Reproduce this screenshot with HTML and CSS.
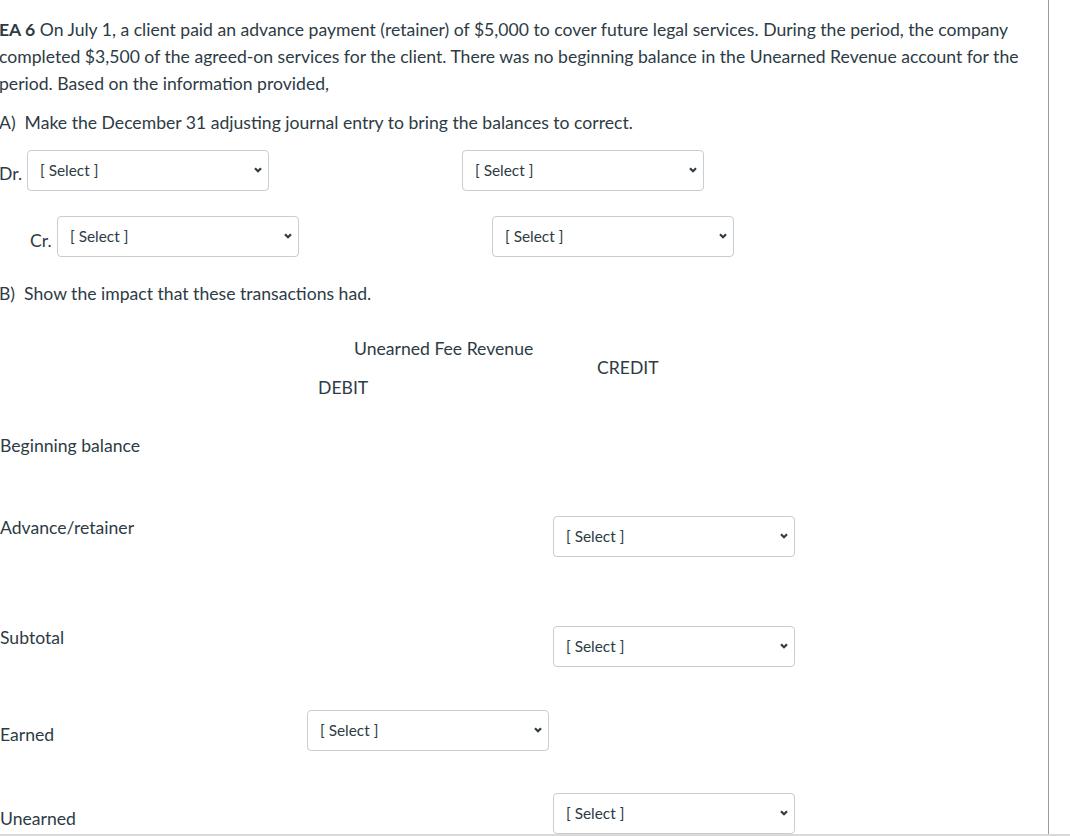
FILE: index.html
```html
<!DOCTYPE html>
<html lang="en">
<head>
<meta charset="utf-8">
<title>EA 6</title>
<link rel="stylesheet" href="styles.css">
</head>
<body>
<div class="frame">
  <div class="content">
    <p class="question"><strong>EA 6</strong> On July 1, a client paid an advance payment (retainer) of $5,000 to cover future legal services. During the period, the company completed $3,500 of the agreed-on services for the client. There was no beginning balance in the Unearned Revenue account for the period. Based on the information provided,</p>
    <p class="part part-a">A)&nbsp; Make the December 31 adjusting journal entry to bring the balances to correct.</p>

    <div class="entry">
      <span class="entry-label">Dr.</span>
      <span class="sel"><select><option>[ Select ]</option></select><svg class="chev" viewBox="0 0 8 6" width="8" height="6"><path d="M1 1.2 L4 4.2 L7 1.2" fill="none" stroke="#2d3b45" stroke-width="2.2"/></svg></span>
      <span class="sel sel-amount"><select><option>[ Select ]</option></select><svg class="chev" viewBox="0 0 8 6" width="8" height="6"><path d="M1 1.2 L4 4.2 L7 1.2" fill="none" stroke="#2d3b45" stroke-width="2.2"/></svg></span>
    </div>

    <div class="entry entry-cr">
      <span class="entry-label">Cr.</span>
      <span class="sel"><select><option>[ Select ]</option></select><svg class="chev" viewBox="0 0 8 6" width="8" height="6"><path d="M1 1.2 L4 4.2 L7 1.2" fill="none" stroke="#2d3b45" stroke-width="2.2"/></svg></span>
      <span class="sel sel-amount"><select><option>[ Select ]</option></select><svg class="chev" viewBox="0 0 8 6" width="8" height="6"><path d="M1 1.2 L4 4.2 L7 1.2" fill="none" stroke="#2d3b45" stroke-width="2.2"/></svg></span>
    </div>

    <p class="part part-b">B)&nbsp; Show the impact that these transactions had.</p>

    <div class="taccount">
      <div class="trow thead">
        <div></div>
        <div class="debit-head">
          <div class="acct-title">Unearned Fee Revenue</div>
          <div class="debit-label">DEBIT</div>
        </div>
        <div class="credit-label">CREDIT</div>
      </div>

      <div class="trow row-begin">
        <div class="tlabel">Beginning balance</div>
      </div>

      <div class="trow row-advance">
        <div class="tlabel">Advance/retainer</div>
        <div></div>
        <span class="sel sel-cell"><select><option>[ Select ]</option></select><svg class="chev" viewBox="0 0 8 6" width="8" height="6"><path d="M1 1.2 L4 4.2 L7 1.2" fill="none" stroke="#2d3b45" stroke-width="2.2"/></svg></span>
      </div>

      <div class="trow row-subtotal">
        <div class="tlabel">Subtotal</div>
        <div></div>
        <span class="sel sel-cell"><select><option>[ Select ]</option></select><svg class="chev" viewBox="0 0 8 6" width="8" height="6"><path d="M1 1.2 L4 4.2 L7 1.2" fill="none" stroke="#2d3b45" stroke-width="2.2"/></svg></span>
      </div>

      <div class="trow row-earned">
        <div class="tlabel">Earned</div>
        <span class="sel sel-cell"><select><option>[ Select ]</option></select><svg class="chev" viewBox="0 0 8 6" width="8" height="6"><path d="M1 1.2 L4 4.2 L7 1.2" fill="none" stroke="#2d3b45" stroke-width="2.2"/></svg></span>
        <div></div>
      </div>

      <div class="trow row-unearned">
        <div class="tlabel">Unearned</div>
        <div></div>
        <span class="sel sel-cell"><select><option>[ Select ]</option></select><svg class="chev" viewBox="0 0 8 6" width="8" height="6"><path d="M1 1.2 L4 4.2 L7 1.2" fill="none" stroke="#2d3b45" stroke-width="2.2"/></svg></span>
      </div>
    </div>
  </div>
</div>
</body>
</html>
```

FILE: styles.css
```css
html, body {
  margin: 0;
  padding: 0;
  background: #ffffff;
}

body {
  font-family: Lato, "Helvetica Neue", "Noto Sans", sans-serif;
  font-size: 17.6px;
  color: #2d3b45;
  overflow: hidden;
}

.frame {
  height: 834px;
  border-bottom: 2px solid #d9d9d9;
  overflow: hidden;
}

.content {
  width: 1050px;
  height: 834px;
  border-right: 1px solid #9c9c9c;
  margin-left: -1px;
  box-sizing: border-box;
  padding-top: 16px;
}

.question {
  margin: 0;
  line-height: 27px;
  padding-right: 20px;
}

.question strong {
  font-weight: 700;
}

.part {
  margin: 0;
  line-height: 26px;
}

.part-a {
  margin-top: 13px;
}

.part-b {
  margin-top: 24px;
}

.entry {
  display: flex;
  align-items: flex-start;
  margin-top: 14px;
}

.entry-cr {
  margin-top: 25px;
  padding-left: 31px;
}

.entry-label {
  width: 28px;
  line-height: 26px;
  margin-top: 11px;
}

.entry-cr .entry-label {
  width: 27px;
  margin-top: 12px;
}

.sel {
  position: relative;
  display: block;
  width: 242px;
  height: 41px;
  flex: none;
}

.sel select {
  appearance: none;
  -webkit-appearance: none;
  display: block;
  width: 100%;
  height: 100%;
  box-sizing: border-box;
  margin: 0;
  border: 1px solid #c7cdd1;
  border-radius: 4px;
  background: #ffffff;
  padding: 0 30px 1px 12px;
  font-family: Lato, "Helvetica Neue", "Noto Sans", sans-serif;
  font-size: 15.4px;
  color: #2d3b45;
  line-height: 38px;
}

.chev {
  position: absolute;
  right: 7px;
  top: 17px;
  pointer-events: none;
}

.sel-amount {
  margin-left: 193px;
}

.taccount {
  margin-top: 29px;
}

.trow {
  display: grid;
  grid-template-columns: 308px 246px 242px;
  align-items: start;
  line-height: 26px;
}

.debit-head {
  display: flex;
  flex-direction: column;
}

.acct-title {
  padding-left: 47px;
}

.debit-label {
  padding-left: 11px;
  margin-top: 13px;
}

.credit-label {
  padding-left: 44px;
  margin-top: 19px;
}

.tlabel {
  padding-left: 1px;
}

.row-begin {
  margin-top: 32px;
}

.row-advance {
  margin-top: 56px;
}

.row-advance .sel-cell,
.row-subtotal .sel-cell {
  margin-top: 1px;
}

.row-subtotal {
  margin-top: 68px;
}

.row-earned {
  margin-top: 43px;
}

.row-earned .tlabel {
  margin-top: 12px;
}

.row-unearned {
  margin-top: 42px;
}

.row-unearned .tlabel {
  margin-top: 13px;
}
```
